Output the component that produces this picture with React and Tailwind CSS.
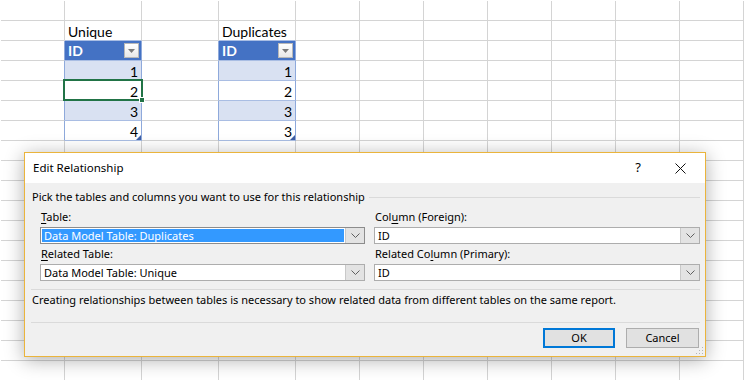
import React from "react";

const colW = [
  "w-[64px]", "w-[77px]", "w-[77px]", "w-[77px]", "w-[64px]", "w-[64px]",
  "w-[64px]", "w-[64px]", "w-[64px]", "w-[64px]", "w-[64px]",
];

const uniq = [1, 2, 3, 4];
const dups = [1, 2, 3, 3];

function FilterBtn() {
  return (
    <div className="w-[15px] h-[15px] mr-[2px] border border-[#b8b8b8] bg-gradient-to-b from-[#ffffff] to-[#e8e8e8] flex items-center justify-center">
      <svg width="7" height="4" viewBox="0 0 7 4">
        <path d="M0 0 H7 L3.5 4 Z" fill="#7a7a7a" />
      </svg>
    </div>
  );
}

function Cell({ r, c }) {
  const isTableCol = c === 1 || c === 3;
  const inTableRows = r >= 2 && r <= 6;
  const rightBlue = inTableRows && c <= 3;
  const bottomBlue = isTableCol && r >= 1 && r <= 6;
  const rightCls = rightBlue ? "border-r-[#8ea9db]" : "border-r-[#d4d4d4]";
  const bottomCls = bottomBlue ? "border-b-[#a9bde3]" : "border-b-[#d4d4d4]";
  let bg = "";
  if (isTableCol && r === 2) bg = "bg-[#4472c4]";
  else if (isTableCol && (r === 3 || r === 5)) bg = "bg-[#d9e1f2]";

  let content = null;
  if (r === 1 && c === 1) content = <span className="pl-[3px] leading-[16px]">Unique</span>;
  if (r === 1 && c === 3) content = <span className="pl-[3px] leading-[16px]">Duplicates</span>;
  if (r === 2 && isTableCol)
    content = (
      <div className="flex w-full items-center justify-between h-full">
        <span className="pl-[3px] text-white font-bold">ID</span>
        <FilterBtn />
      </div>
    );
  if (r >= 3 && r <= 6 && isTableCol) {
    const v = c === 1 ? uniq[r - 3] : dups[r - 3];
    content = <span className="ml-auto pr-[3px] leading-[16px]">{v}</span>;
  }

  return (
    <div
      className={`relative shrink-0 h-5 border-r border-b flex items-end ${colW[c]} ${rightCls} ${bottomCls} ${bg}`}
    >
      {content}
      {r === 6 && isTableCol && (
        <svg className="absolute right-0 bottom-0" width="5" height="5" viewBox="0 0 5 5">
          <path d="M5 0 V5 H0 Z" fill="#3d5fa6" />
        </svg>
      )}
    </div>
  );
}

function Chevron() {
  return (
    <svg width="9" height="5" viewBox="0 0 9 5">
      <path d="M0.5 0.5 L4.5 4.5 L8.5 0.5" fill="none" stroke="#5f5f5f" strokeWidth="1" />
    </svg>
  );
}

function Combo({ value, focused }) {
  return (
    <div className={`h-[17px] flex border ${focused ? "border-[#8c8c8c]" : "border-[#adadad]"} bg-white`}>
      <div className="flex-1 p-px flex">
        <div
          className={`flex-1 flex items-center pl-[2px] leading-[13px] ${
            focused ? "bg-[#3399ff] text-white" : "text-black"
          }`}
        >
          {value}
        </div>
      </div>
      <div className="w-[19px] border-l border-[#c9c9c9] bg-[#e3e3e3] flex items-center justify-center">
        <Chevron />
      </div>
    </div>
  );
}

export default function App() {
  const rows = Array.from({ length: 19 }, (_, i) => i);
  const cols = Array.from({ length: 11 }, (_, i) => i);
  return (
    <div className="relative w-[744px] h-[380px] overflow-hidden bg-white text-[14px] text-black [font-family:Lato,'Liberation_Sans',sans-serif]">
      <div className="pt-px pl-px">
        {rows.map((r) => (
          <div key={r} className="flex">
            {cols.map((c) => (
              <Cell key={c} r={r} c={c} />
            ))}
          </div>
        ))}
      </div>

      {/* selected cell */}
      <div className="absolute left-[63px] top-[79px] w-[80px] h-[22px] border-2 border-[#217346]" />
      <div className="absolute left-[139px] top-[97px] w-[6px] h-[6px] bg-[#217346] border border-white" />

      {/* dialog */}
      <div className="absolute left-[24px] top-[152px] w-[682px] h-[205px] border border-[#eab43c] bg-[#f0f0f0] shadow-[0_3px_18px_rgba(0,0,0,0.32)] text-[11px] [font-family:'Noto_Sans','Open_Sans',sans-serif] flex flex-col">
        <div className="h-[30px] bg-white flex items-center shrink-0">
          <span className="pl-[8px] text-[11.5px] flex-1">Edit Relationship</span>
          <span className="w-[14px] text-center text-[13px] mr-[30px]">?</span>
          <svg width="11" height="11" viewBox="0 0 11 11" className="mr-[19px]">
            <path d="M0.5 0.5 L10.5 10.5 M10.5 0.5 L0.5 10.5" stroke="#111" strokeWidth="1" />
          </svg>
        </div>
        <div className="relative flex-1 pl-[6px] pr-[5px] flex flex-col">
          <div className="mt-[6px] h-[16px] flex items-center">
            <span className="pl-[1px] leading-[16px] whitespace-nowrap">
              Pick the tables and columns you want to use for this relationship
            </span>
            <div className="flex-1 h-px bg-[#dadada] ml-[4px]" />
          </div>
          <div className="pl-[9px] flex gap-[9px] mt-[4px]">
            <div className="w-[325px] flex flex-col">
              <div className="h-[16px] leading-[16px] pl-[1px]">
                <span className="underline underline-offset-2">T</span>able:
              </div>
              <div className="mt-[2px]">
                <Combo value="Data Model Table: Duplicates" focused />
              </div>
              <div className="h-[16px] leading-[16px] pl-[1px] mt-[2px]">
                <span className="underline underline-offset-2">R</span>elated Table:
              </div>
              <div className="mt-[2px]">
                <Combo value="Data Model Table: Unique" />
              </div>
            </div>
            <div className="w-[326px] flex flex-col">
              <div className="h-[16px] leading-[16px] pl-[1px]">
                Col<span className="underline underline-offset-2">u</span>mn (Foreign):
              </div>
              <div className="mt-[2px]">
                <Combo value="ID" />
              </div>
              <div className="h-[16px] leading-[16px] pl-[1px] mt-[2px]">
                Related Co<span className="underline underline-offset-2">l</span>umn (Primary):
              </div>
              <div className="mt-[2px]">
                <Combo value="ID" />
              </div>
            </div>
          </div>
          <div className="mt-[8px] h-px bg-[#dadada]" />
          <div className="mt-[2px] h-[16px] leading-[16px] pl-[1px] whitespace-nowrap">
            Creating relationships between tables is necessary to show related data from different tables on the same report.
          </div>
          <div className="mt-[14px] h-px bg-[#dadada]" />
          <div className="mt-[5px] flex justify-end gap-[11px] pr-[1px]">
            <div className="w-[72px] h-[20px] border-2 border-[#0078d7] bg-[#e1e1e1] flex items-center justify-center">
              OK
            </div>
            <div className="w-[73px] h-[20px] border border-[#adadad] bg-[#e1e1e1] flex items-center justify-center">
              Cancel
            </div>
          </div>
          <svg className="absolute right-[1px] bottom-[1px]" width="8" height="8" viewBox="0 0 8 8">
            <rect x="6" y="0" width="1" height="1" fill="#b5b5b5" />
            <rect x="3" y="3" width="1" height="1" fill="#b5b5b5" />
            <rect x="6" y="3" width="1" height="1" fill="#b5b5b5" />
            <rect x="0" y="6" width="1" height="1" fill="#b5b5b5" />
            <rect x="3" y="6" width="1" height="1" fill="#b5b5b5" />
            <rect x="6" y="6" width="1" height="1" fill="#b5b5b5" />
          </svg>
        </div>
      </div>
    </div>
  );
}
